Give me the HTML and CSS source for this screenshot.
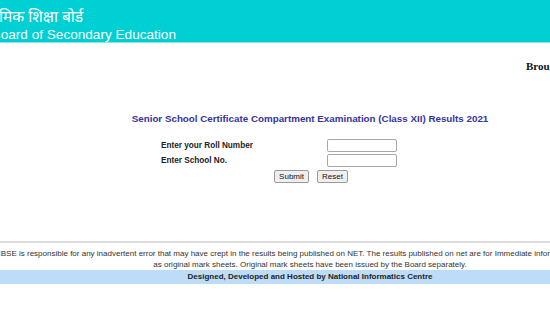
FILE: index.html
```html
<!DOCTYPE html>
<html lang="en">
<head>
<meta charset="utf-8">
<title>CBSE Results 2021</title>
<link rel="stylesheet" href="styles.css">
</head>
<body>
<div class="page">
  <header class="masthead">
    <div class="brand">
      <div class="brand-hi" lang="hi">केन्द्रीय माध्यमिक शिक्षा बोर्ड</div>
      <div class="brand-en">Central Board of Secondary Education</div>
    </div>
  </header>
  <div class="brought">Brought to you by:</div>
  <main class="content">
    <h1 class="title">Senior School Certificate Compartment Examination (Class XII) Results 2021</h1>
    <form class="result-form">
      <label class="lbl" for="roll">Enter your Roll Number</label>
      <input class="field" id="roll" type="text">
      <label class="lbl" for="school">Enter School No.</label>
      <input class="field" id="school" type="text">
      <div class="actions">
        <button class="btn" type="submit">Submit</button>
        <button class="btn" type="reset">Reset</button>
      </div>
    </form>
  </main>
  <hr class="rule">
  <p class="disclaimer"><span class="line1">CBSE is responsible for any inadvertent error that may have crept in the results being published on NET. The results published on net are for Immediate information to the examinees. These cannot be treated</span><br>as original mark sheets. Original mark sheets have been issued by the Board separately.</p>
  <footer class="credits">Designed, Developed and Hosted by National Informatics Centre</footer>
</div>
</body>
</html>
```
FILE: styles.css
```css
html, body {
  margin: 0;
  padding: 0;
  overflow: hidden;
  background: #ffffff;
}
body {
  width: 550px;
  height: 309px;
  font-family: "Liberation Sans", Arial, sans-serif;
}
.page {
  width: 630px;
  margin-left: -5px;
}
.masthead {
  background: #00cfd4;
  height: 42px;
  border-bottom: 1px solid #8fe6ea;
  overflow: hidden;
}
.brand {
  padding-top: 10px;
  margin-left: -51px;
  color: #ffffff;
}
.brand-hi {
  font-family: "Noto Sans Devanagari", "Lohit Devanagari", "Noto Sans", sans-serif;
  font-size: 15.5px;
  line-height: 17px;
  margin-left: -15px;
  white-space: nowrap;
}
.brand-en {
  font-size: 13.6px;
  line-height: 15px;
}
.brought {
  font-family: "Liberation Serif", "Times New Roman", serif;
  font-weight: bold;
  font-size: 11px;
  line-height: 12px;
  color: #111111;
  margin-top: 17px;
  padding-left: 531px;
  white-space: nowrap;
}
.content {
  padding-top: 41px;
}
.title {
  margin: 0;
  text-align: center;
  font-size: 9.8px;
  line-height: 12px;
  font-weight: bold;
  color: #3434a0;
}
.result-form {
  width: 300px;
  margin: 14px auto 0;
  display: grid;
  grid-template-columns: 166px 70px 1fr;
  row-gap: 2px;
  padding-left: 1px;
  box-sizing: border-box;
}
.lbl {
  grid-column: 1;
  font-size: 8.2px;
  font-weight: bold;
  color: #222222;
  align-self: center;
}
.field {
  grid-column: 2;
  width: 70px;
  height: 13px;
  box-sizing: border-box;
  border: 1px solid #a8a8a8;
  border-radius: 2px;
  margin: 0;
  padding: 0 2px;
  background: #ffffff;
}
.actions {
  grid-column: 1 / -1;
  display: flex;
  justify-content: center;
  gap: 8px;
  margin-left: 1px;
  margin-top: 1px;
}
.btn {
  font-family: "Liberation Sans", Arial, sans-serif;
  font-size: 8px;
  height: 13px;
  padding: 0 4px;
  margin: 0;
  border: 1px solid #9a9a9a;
  border-radius: 2px;
  background: #efefef;
  color: #111111;
  line-height: 11px;
}
.rule {
  margin: 58px 0 0;
  border: 0;
  height: 2px;
  background: #dcdcdc;
}
.disclaimer {
  margin: 5px 0 0;
  text-align: center;
  font-size: 8px;
  line-height: 11px;
  color: #333333;
}
.line1 {
  white-space: nowrap;
}
.credits {
  background: #bcdcf7;
  text-align: center;
  font-size: 8px;
  font-weight: bold;
  line-height: 14px;
  color: #222222;
  margin-top: 0;
}
```
